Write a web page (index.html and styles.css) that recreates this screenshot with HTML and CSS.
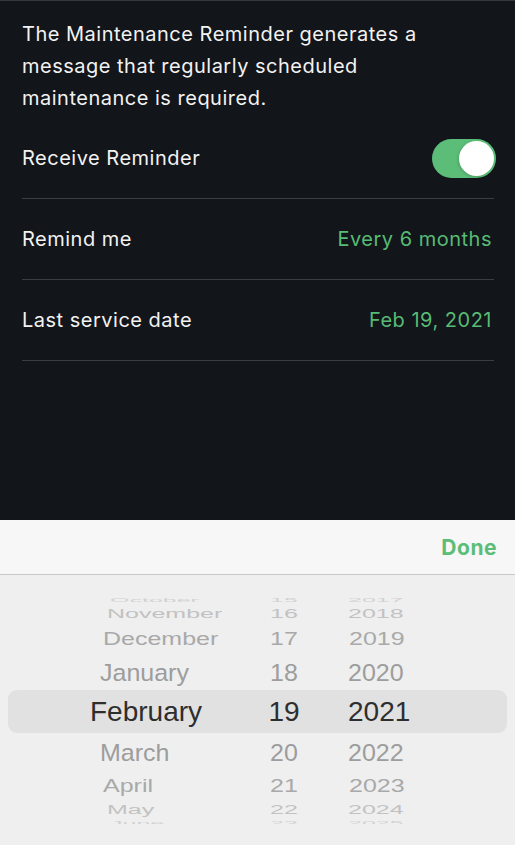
FILE: index.html
```html
<!DOCTYPE html>
<html lang="en">
<head>
    <meta charset="UTF-8">
    <meta name="viewport" content="width=device-width, initial-scale=1.0">
    <title>Maintenance Reminder</title>
    <link rel="stylesheet" href="styles.css">
</head>
<body>
    <div class="settings">
        <p class="intro">The Maintenance Reminder generates a message that regularly scheduled maintenance is required.</p>

        <div class="row">
            <span class="label">Receive Reminder</span>
            <span class="toggle on"><span class="knob"></span></span>
        </div>
        <div class="row">
            <span class="label">Remind me</span>
            <span class="value">Every 6 months</span>
        </div>
        <div class="row">
            <span class="label">Last service date</span>
            <span class="value">Feb 19, 2021</span>
        </div>
    </div>

    <div class="sheet">
        <div class="toolbar">
            <button class="done">Done</button>
        </div>
        <div class="picker">
            <div class="wheel">
                <div class="item d4 first"><span class="month">October</span><span class="day">15</span><span class="year">2017</span></div>
                <div class="item d3 h18"><span class="month">November</span><span class="day">16</span><span class="year">2018</span></div>
                <div class="item d2 h32"><span class="month">December</span><span class="day">17</span><span class="year">2019</span></div>
                <div class="item d1 h36"><span class="month">January</span><span class="day">18</span><span class="year">2020</span></div>
                <div class="item selected"><span class="month">February</span><span class="day">19</span><span class="year">2021</span></div>
                <div class="item d1 h38"><span class="month">March</span><span class="day">20</span><span class="year">2022</span></div>
                <div class="item d2 h29"><span class="month">April</span><span class="day">21</span><span class="year">2023</span></div>
                <div class="item d3 h19"><span class="month">May</span><span class="day">22</span><span class="year">2024</span></div>
                <div class="item d4 last"><span class="month">June</span><span class="day">23</span><span class="year">2025</span></div>
            </div>
        </div>
    </div>
</body>
</html>
```

FILE: styles.css
```css
/* page */
body {
    margin: 0;
    height: 845px;
    overflow: hidden;
    background-color: #121519;
    font-family: Inter, "Noto Sans", sans-serif;
}

/* dark settings area */
.settings {
    height: 519px;
    border-top: 1px solid #34373b;
    padding: 0 21px 0 22px;
    color: #f2f2f2;
}

.intro {
    max-width: 430px;
    margin: 17px 0 4px;
    font-size: 20px;
    line-height: 32px;
    letter-spacing: 0.5px;
}

.row {
    display: flex;
    justify-content: space-between;
    align-items: center;
    height: 80px;
    border-bottom: 1px solid #3a3d41;
    font-size: 20px;
    letter-spacing: 0.5px;
}

.value {
    color: #58bb75;
    margin-right: 2px;
}

.toggle {
    position: relative;
    width: 64px;
    height: 39px;
    margin-right: -2px;
    border-radius: 20px;
    background-color: #3a3d41;
}

.toggle.on {
    background-color: #5bbd78;
}

.knob {
    position: absolute;
    top: 2px;
    right: 2px;
    width: 35px;
    height: 35px;
    border-radius: 50%;
    background-color: #fff;
    box-shadow: -1px 1px 3px rgba(0, 0, 0, 0.15);
}

/* bottom date sheet */
.sheet {
    font-family: "Liberation Sans", Arial, sans-serif;
}

.toolbar {
    display: flex;
    justify-content: flex-end;
    align-items: center;
    height: 54px;
    padding-right: 18px;
    background-color: #f7f7f7;
    border-bottom: 1px solid #c8c8c8;
}

.done {
    border: none;
    background: none;
    padding: 0;
    font-family: Inter, "Noto Sans", sans-serif;
    font-size: 21px;
    font-weight: 700;
    letter-spacing: 0.5px;
    color: #5bbd78;
    cursor: pointer;
}

.picker {
    height: 270px;
    padding-top: 23px;
    background-color: #efefef;
}

.wheel {
    height: 226px;
    overflow: hidden;
}

.item {
    display: grid;
    grid-template-columns: 160px 68px auto;
    grid-template-rows: 100%;
    align-items: center;
    margin: 0 8px;
    padding-left: 82px;
    font-size: 25px;
    line-height: 1;
    white-space: nowrap;
}

.item span {
    display: block;
}

.day {
    text-align: center;
}

.year {
    padding-left: 30px;
}

.selected {
    height: 43px;
    border-radius: 9px;
    background-color: #e1e1e1;
    font-size: 28px;
    color: #2e2e2e;
}

/* wheel depth: further rows are flatter and lighter */
.d1 { color: #9d9d9d; }
.d1 .month { padding-left: 10px; }
.d1 span { transform: scaleY(0.95); }

.d2 { color: #a9a9a9; }
.d2 .month { padding-left: 13px; }
.d2 .year { padding-left: 31px; }
.d2 span { transform: scaleY(0.76); }

.d3 { color: #c2c2c2; }
.d3 .month { padding-left: 17px; }
.d3 span { transform: scaleY(0.5); }

.d4 { color: #d2d2d2; overflow: hidden; }
.d4 .month { padding-left: 20px; }
.d4 span { transform: scaleY(0.22); }

.first { height: 8px; margin-top: -2px; }
.last { height: 8px; }
.h18 { height: 18px; }
.h19 { height: 19px; }
.h29 { height: 29px; }
.h32 { height: 32px; }
.h36 { height: 36px; }
.h38 { height: 38px; }
```
